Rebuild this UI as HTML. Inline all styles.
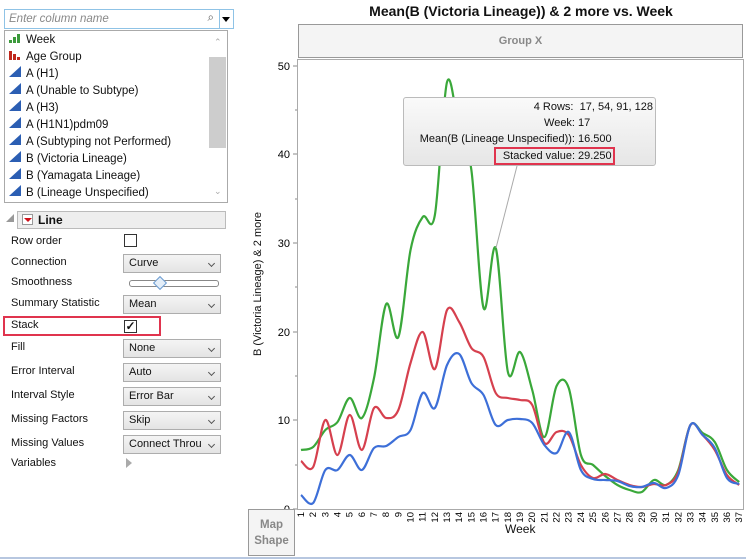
<!DOCTYPE html>
<html><head><meta charset="utf-8"><style>
body{margin:0;width:746px;height:560px;background:#fff;font-family:"Liberation Sans",sans-serif;font-size:11px;color:#111;position:relative;overflow:hidden}
.a{position:absolute}
.dd{position:absolute;left:123px;width:98px;height:19px;border:1px solid #adadad;background:linear-gradient(#f4f4f4,#e4e4e4);box-sizing:border-box;padding:2px 0 0 5px;font-size:11px}
.dd:after{content:"";position:absolute;right:6px;top:6px;width:4px;height:4px;border-right:1px solid #555;border-bottom:1px solid #555;transform:rotate(45deg)}
.lbl{position:absolute;left:11px;font-size:11px}
.it{position:absolute;left:26px;font-size:11.5px}
</style></head><body>
<div class="a" style="left:4px;top:9px;width:216px;height:20px;border:1px solid #8fc3e6;box-sizing:border-box;font-style:italic;color:#888;padding:3px 0 0 4px;font-size:11.5px">Enter column name<span class="a" style="right:5px;top:2px;font-style:normal;color:#555">&#x2315;</span></div>
<div class="a" style="left:220px;top:9px;width:14px;height:20px;border:1px solid #8fc3e6;border-left:none;box-sizing:border-box"><div class="a" style="left:2px;top:7px;border-left:4px solid transparent;border-right:4px solid transparent;border-top:5px solid #000"></div></div>
<div class="a" style="left:4px;top:30px;width:224px;height:173px;border:1px solid #aaa;box-sizing:border-box"></div>
<div class="a" style="left:209px;top:57px;width:17px;height:91px;background:#cdcdcd"></div>
<div class="a" style="left:214px;top:37px;font-size:9px;color:#aaa">&#8963;</div>
<div class="a" style="left:214px;top:186px;font-size:9px;color:#aaa">&#8964;</div>
<svg class="a" style="left:0;top:30px" width="30" height="172">
<g fill="#3c9a3c"><rect x="9" y="10" width="3" height="3"/><rect x="13" y="7" width="3" height="6"/><rect x="17" y="4" width="3" height="9"/></g>
<g fill="#c0281c"><rect x="9" y="21" width="3" height="9"/><rect x="13" y="24" width="3" height="6"/><rect x="17" y="27" width="3" height="3"/></g>
<g fill="#2b5eb3">
<polygon points="9,47 21,36 21,47"/><polygon points="9,64 21,53 21,64"/><polygon points="9,81 21,70 21,81"/><polygon points="9,98 21,87 21,98"/><polygon points="9,115 21,104 21,115"/><polygon points="9,132 21,121 21,132"/><polygon points="9,149 21,138 21,149"/><polygon points="9,166 21,155 21,166"/></g>
</svg>
<div class="it" style="top:34px">Week</div>
<div class="it" style="top:51px">Age Group</div>
<div class="it" style="top:68px">A (H1)</div>
<div class="it" style="top:85px">A (Unable to Subtype)</div>
<div class="it" style="top:102px">A (H3)</div>
<div class="it" style="top:119px">A (H1N1)pdm09</div>
<div class="it" style="top:136px">A (Subtyping not Performed)</div>
<div class="it" style="top:153px">B (Victoria Lineage)</div>
<div class="it" style="top:170px">B (Yamagata Lineage)</div>
<div class="it" style="top:187px">B (Lineage Unspecified)</div>
<div class="a" style="left:6px;top:214px;width:0;height:0;border-left:8px solid transparent;border-bottom:8px solid #999"></div>
<div class="a" style="left:17px;top:211px;width:209px;height:18px;border:1px solid #bbb;background:#eee;box-sizing:border-box"></div>
<div class="a" style="left:22px;top:214px;width:11px;height:11px;border:1px solid #999;background:#fff;box-sizing:border-box"><div class="a" style="left:1px;top:3px;border-left:4px solid transparent;border-right:4px solid transparent;border-top:4px solid #d0101a"></div></div>
<div class="a" style="left:38px;top:213px;font-weight:bold;font-size:12px">Line</div>
<div class="lbl" style="top:235px">Row order</div>
<div class="a" style="left:124px;top:234px;width:13px;height:13px;border:1px solid #333;box-sizing:border-box;background:#fff"></div>
<div class="lbl" style="top:256px">Connection</div><div class="dd" style="top:254px">Curve</div>
<div class="lbl" style="top:276px">Smoothness</div>
<div class="a" style="left:129px;top:280px;width:88px;height:5px;border:1px solid #888;border-radius:3px;background:#fff"></div>
<div class="a" style="left:155px;top:278px;width:8px;height:8px;border:1px solid #6b9bd0;background:#e4eef8;transform:rotate(45deg)"></div>
<div class="lbl" style="top:297px">Summary Statistic</div><div class="dd" style="top:295px">Mean</div>
<div class="a" style="left:3px;top:316px;width:158px;height:20px;border:2px solid #e0344e;box-sizing:border-box"></div>
<div class="lbl" style="top:319px">Stack</div>
<div class="a" style="left:124px;top:320px;width:13px;height:13px;border:1px solid #333;box-sizing:border-box;background:#fff;font-size:12px;line-height:11px;text-align:center;font-weight:bold">&#10003;</div>
<div class="lbl" style="top:341px">Fill</div><div class="dd" style="top:339px">None</div>
<div class="lbl" style="top:365px">Error Interval</div><div class="dd" style="top:363px">Auto</div>
<div class="lbl" style="top:389px">Interval Style</div><div class="dd" style="top:387px">Error Bar</div>
<div class="lbl" style="top:413px">Missing Factors</div><div class="dd" style="top:411px">Skip</div>
<div class="lbl" style="top:437px">Missing Values</div><div class="dd" style="top:435px;overflow:hidden;white-space:nowrap">Connect Throu</div>
<div class="lbl" style="top:457px">Variables</div>
<div class="a" style="left:126px;top:458px;width:0;height:0;border-top:5px solid transparent;border-bottom:5px solid transparent;border-left:6px solid #aaa"></div>
<div class="a" style="left:298px;top:3px;width:446px;text-align:center;font-weight:bold;font-size:14px">Mean(B (Victoria Lineage)) &amp; 2 more vs. Week</div>
<div class="a" style="left:298px;top:24px;width:445px;height:34px;border:1px solid #999;box-sizing:border-box;background:#f4f4f4;text-align:center;color:#888;font-weight:bold;padding-top:10px">Group X</div>
<div class="a" style="left:258px;top:284px;transform:translate(-50%,-50%) rotate(-90deg);white-space:nowrap;font-size:11px">B (Victoria Lineage) &amp; 2 more</div>
<svg class="a" style="left:0;top:0" width="746" height="560">
<rect x="297.5" y="59.5" width="446" height="450" fill="#fff" stroke="#aaa"/>
<g font-size="11" text-anchor="end" font-family="Liberation Sans">
<text x="290" y="70">50</text><text x="290" y="158">40</text><text x="290" y="247">30</text><text x="290" y="336">20</text><text x="290" y="424">10</text><text x="290" y="513">0</text></g>
<g stroke="#888"><path d="M293 66H297M293 154H297M293 243H297M293 332H297M293 420H297M293 509H297M295 110H297M295 199H297M295 287H297M295 376H297M295 465H297"/></g>
<g id="wk" font-size="9.5" font-family="Liberation Sans"></g>
<g id="ln" fill="none" stroke-width="2.2"></g>
<line x1="496" y1="248" x2="517" y2="166" stroke="#aaa"/>
</svg>
<div class="a" style="left:403px;top:97px;width:253px;height:69px;border:1px solid #bbb;border-radius:3px;background:linear-gradient(#fafafa,#e6e6e6);box-sizing:border-box;font-size:11px;line-height:16px">
<div class="a" style="right:2px;top:1px;text-align:right;white-space:nowrap">4 Rows: &nbsp;17, 54, 91, 128</div>
<div class="a" style="left:0;width:171px;top:17px;text-align:right">Week:</div><div class="a" style="left:174px;top:17px">17</div>
<div class="a" style="left:0;width:171px;top:33px;text-align:right;white-space:nowrap">Mean(B (Lineage Unspecified)):</div><div class="a" style="left:174px;top:33px">16.500</div>
<div class="a" style="left:90px;top:49px;width:121px;height:18px;border:2px solid #e0344e;box-sizing:border-box"></div>
<div class="a" style="left:0;width:171px;top:50px;text-align:right">Stacked value:</div><div class="a" style="left:174px;top:50px">29.250</div>
</div>
<div class="a" style="left:248px;top:509px;width:47px;height:47px;border:1px solid #999;box-sizing:border-box;background:#f4f4f4;text-align:center;color:#888;font-weight:bold;font-size:11.5px;line-height:16px;padding-top:7px">Map<br>Shape</div>
<div class="a" style="left:505px;top:522px;font-size:12px">Week</div>
<div class="a" style="left:0;top:557px;width:746px;height:2px;background:#b7c7e0"></div>
<script>
var G=[450,447,430,422,398,418,378,304,337,250,217,215,82,130,170,308,248,372,352,390,437,386,388,455,465,476,485,490,492,480,485,470,425,433,442,470,482];
var R=[461,467,420,455,415,450,408,418,410,363,332,369,310,322,348,357,393,398,400,405,443,432,435,465,478,474,480,485,487,484,485,472,425,435,450,475,485];
var B=[495,503,470,470,455,470,448,446,437,430,393,408,365,354,383,395,425,420,419,423,445,453,432,470,479,480,481,486,487,483,488,475,425,435,448,478,484];
function X(i){return 301+i*12.17}
function path(a){var p=[];for(var i=0;i<a.length;i++)p.push([X(i),a[i]]);var d="M"+p[0][0]+" "+p[0][1];
for(var i=0;i<p.length-1;i++){var p0=p[Math.max(0,i-1)],p1=p[i],p2=p[i+1],p3=p[Math.min(p.length-1,i+2)];
d+="C"+(p1[0]+(p2[0]-p0[0])/6)+" "+(p1[1]+(p2[1]-p0[1])/6)+" "+(p2[0]-(p3[0]-p1[0])/6)+" "+(p2[1]-(p3[1]-p1[1])/6)+" "+p2[0]+" "+p2[1];}return d}
var ns="http://www.w3.org/2000/svg",ln=document.getElementById("ln");
[[G,"#3aa83a"],[R,"#d6404e"],[B,"#3d6fd8"]].forEach(function(s){var e=document.createElementNS(ns,"path");e.setAttribute("d",path(s[0]));e.setAttribute("stroke",s[1]);ln.appendChild(e)});
var wk=document.getElementById("wk");
for(var i=0;i<37;i++){var t=document.createElementNS(ns,"text");var x=X(i)+3;t.setAttribute("transform","translate("+x+",512) rotate(-90)");t.setAttribute("text-anchor","end");t.textContent=i+1;wk.appendChild(t)}
</script>
</body></html>
